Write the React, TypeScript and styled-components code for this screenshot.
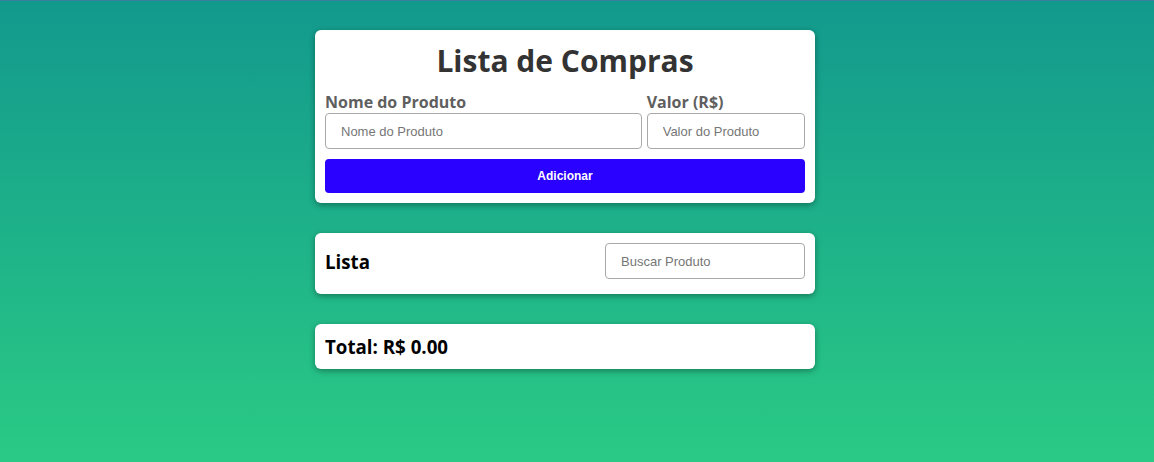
import React, { useState } from "react";
import styled, { createGlobalStyle } from "styled-components";

const GlobalStyle = createGlobalStyle`
    * {
        box-sizing: border-box;
    }

    html, body {
        margin: 0;
        padding: 0;
    }

    body {
        min-height: 100vh;
        font-family: "Open Sans", sans-serif;
        background: linear-gradient(to bottom, #12998d 0%, #2aca85 100%);
        border-top: 1px solid #3c7f9f;
    }
`;

const Page = styled.main`
    display: flex;
    flex-direction: column;
    align-items: center;
    gap: 30px;
    padding: 29px 24px 0 0;
`;

const Card = styled.section`
    width: 500px;
    background: #ffffff;
    border-radius: 6px;
    padding: 10px;
    box-shadow: 0 2px 6px rgba(0, 0, 0, 0.35);
`;

const Title = styled.h1`
    margin: 0 0 10px 0;
    font-size: 30px;
    font-weight: 700;
    color: #333333;
    text-align: center;
    line-height: 41px;
`;

const FieldRow = styled.div`
    display: flex;
    gap: 5px;
`;

const Field = styled.label<{ grow: number }>`
    flex: ${(props) => props.grow};
    display: flex;
    flex-direction: column;
    min-width: 0;
`;

const LabelText = styled.span`
    font-size: 16px;
    font-weight: 700;
    color: #5f5f5f;
    line-height: 22px;
`;

const Input = styled.input<{ width?: string }>`
    width: ${(props) => props.width || "100%"};
    height: 36px;
    padding: 0 15px;
    border: 1px solid #a9a9a9;
    border-radius: 4px;
    font-family: "Liberation Sans", Arial, sans-serif;
    font-size: 13px;
    color: #333;
    outline: none;

    &::placeholder {
        color: #767676;
    }
`;

const Button = styled.button`
    width: 100%;
    height: 34px;
    margin-top: 10px;
    border: none;
    border-radius: 4px;
    background: #2a00ff;
    color: #ffffff;
    font-family: "Liberation Sans", Arial, sans-serif;
    font-size: 12px;
    font-weight: 700;
    cursor: pointer;
`;

const Bar = styled.div`
    display: flex;
    align-items: center;
    justify-content: space-between;
`;

const Heading = styled.h3`
    margin: 0;
    font-size: 18.72px;
    font-weight: 700;
    color: #000000;
    line-height: 25px;
`;

const ItemList = styled.ul`
    list-style: none;
    margin: 5px 0 0 0;
    padding: 0;
`;

const Item = styled.li`
    display: flex;
    justify-content: space-between;
    padding: 6px 0;
    font-size: 14px;
    border-bottom: 1px solid #eee;
`;

export default function App() {
    const [name, setName] = useState("");
    const [value, setValue] = useState("");
    const [search, setSearch] = useState("");
    const [items, setItems] = useState<{ name: string; value: number }[]>([]);

    const total = items.reduce((sum, item) => sum + item.value, 0);
    const shown = items.filter((item) =>
        item.name.toLowerCase().includes(search.toLowerCase())
    );

    const add = () => {
        if (!name || !value) return;
        setItems([...items, { name, value: parseFloat(value) || 0 }]);
        setName("");
        setValue("");
    };

    return (
        <>
            <GlobalStyle />
            <Page>
                <Card>
                    <Title>Lista de Compras</Title>
                    <FieldRow>
                        <Field grow={2}>
                            <LabelText>Nome do Produto</LabelText>
                            <Input
                                placeholder="Nome do Produto"
                                value={name}
                                onChange={(e) => setName(e.target.value)}
                            />
                        </Field>
                        <Field grow={1}>
                            <LabelText>Valor (R$)</LabelText>
                            <Input
                                placeholder="Valor do Produto"
                                value={value}
                                onChange={(e) => setValue(e.target.value)}
                            />
                        </Field>
                    </FieldRow>
                    <Button onClick={add}>Adicionar</Button>
                </Card>
                <Card>
                    <Bar>
                        <Heading>Lista</Heading>
                        <Input
                            width="200px"
                            placeholder="Buscar Produto"
                            value={search}
                            onChange={(e) => setSearch(e.target.value)}
                        />
                    </Bar>
                    <ItemList>
                        {shown.map((item, i) => (
                            <Item key={i}>
                                <span>{item.name}</span>
                                <span>R$ {item.value.toFixed(2)}</span>
                            </Item>
                        ))}
                    </ItemList>
                </Card>
                <Card>
                    <Heading>Total: R$ {total.toFixed(2)}</Heading>
                </Card>
            </Page>
        </>
    );
}
